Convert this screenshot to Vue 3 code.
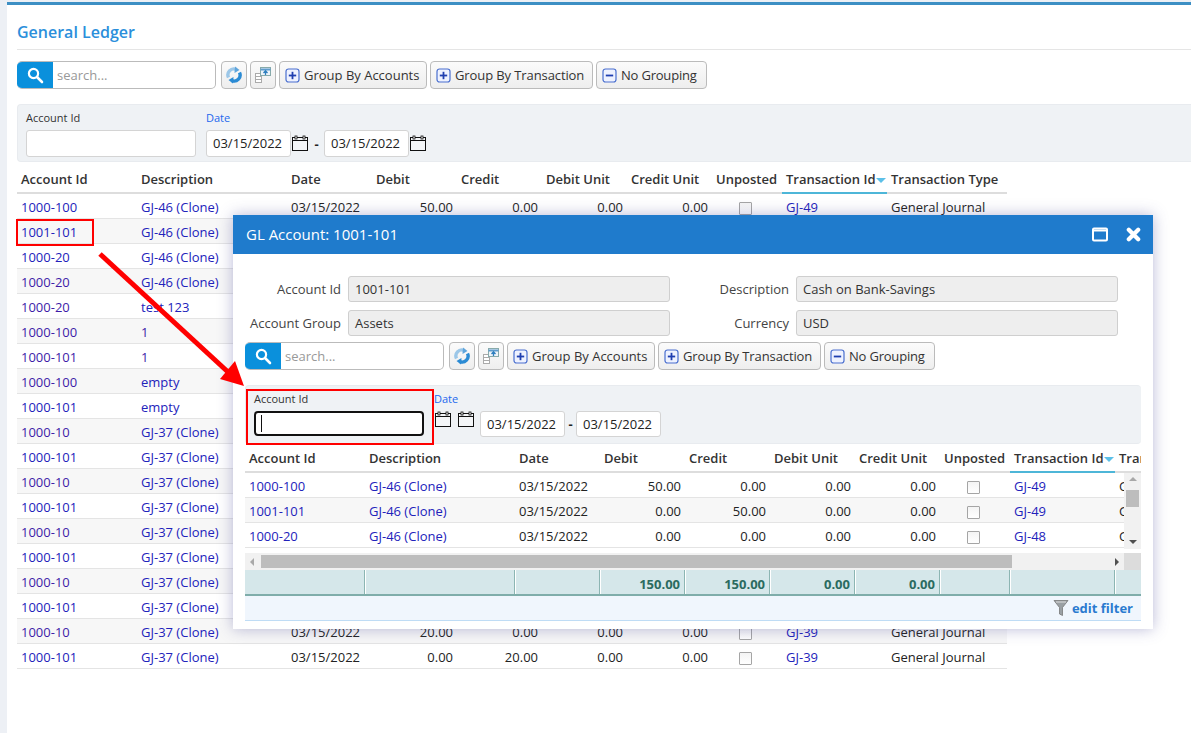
<script setup>
const cols = [
  { key: 'acc', label: 'Account Id', w: 120 },
  { key: 'desc', label: 'Description', w: 150 },
  { key: 'date', label: 'Date', w: 85 },
  { key: 'debit', label: 'Debit', w: 85 },
  { key: 'credit', label: 'Credit', w: 85 },
  { key: 'du', label: 'Debit Unit', w: 85 },
  { key: 'cu', label: 'Credit Unit', w: 85 },
  { key: 'unp', label: 'Unposted', w: 70 },
  { key: 'tid', label: 'Transaction Id', w: 105 },
  { key: 'type', label: 'Transaction Type', w: 120 },
]
const mk = (acc, desc, debit, credit, tid, seen = false) => ({ acc, desc, debit, credit, tid, seen })
const rows = [
  mk('1000-100', 'GJ-46 (Clone)', '50.00', '0.00', 'GJ-49'),
  mk('1001-101', 'GJ-46 (Clone)', '0.00', '50.00', 'GJ-49'),
  mk('1000-20', 'GJ-46 (Clone)', '0.00', '0.00', 'GJ-48'),
  mk('1000-20', 'GJ-46 (Clone)', '0.00', '0.00', 'GJ-48', true),
  mk('1000-20', 'test 123', '0.00', '0.00', 'GJ-47', true),
  mk('1000-100', '1', '0.00', '0.00', 'GJ-46', true),
  mk('1000-101', '1', '0.00', '0.00', 'GJ-46', true),
  mk('1000-100', 'empty', '0.00', '0.00', 'GJ-45', true),
  mk('1000-101', 'empty', '0.00', '0.00', 'GJ-45'),
  mk('1000-10', 'GJ-37 (Clone)', '20.00', '0.00', 'GJ-44', true),
  mk('1000-101', 'GJ-37 (Clone)', '0.00', '20.00', 'GJ-44'),
  mk('1000-10', 'GJ-37 (Clone)', '20.00', '0.00', 'GJ-43', true),
  mk('1000-101', 'GJ-37 (Clone)', '0.00', '20.00', 'GJ-43'),
  mk('1000-10', 'GJ-37 (Clone)', '20.00', '0.00', 'GJ-42', true),
  mk('1000-101', 'GJ-37 (Clone)', '0.00', '20.00', 'GJ-42'),
  mk('1000-10', 'GJ-37 (Clone)', '20.00', '0.00', 'GJ-41', true),
  mk('1000-101', 'GJ-37 (Clone)', '0.00', '20.00', 'GJ-41'),
  mk('1000-10', 'GJ-37 (Clone)', '20.00', '0.00', 'GJ-39', true),
  mk('1000-101', 'GJ-37 (Clone)', '0.00', '20.00', 'GJ-39'),
]
const modalRows = [
  mk('1000-100', 'GJ-46 (Clone)', '50.00', '0.00', 'GJ-49'),
  mk('1001-101', 'GJ-46 (Clone)', '0.00', '50.00', 'GJ-49'),
  mk('1000-20', 'GJ-46 (Clone)', '0.00', '0.00', 'GJ-48'),
]
const totals = [
  { w: 120, v: '' }, { w: 150, v: '' }, { w: 85, v: '' }, { w: 85, v: '150.00' }, { w: 85, v: '150.00' },
  { w: 85, v: '0.00' }, { w: 85, v: '0.00' }, { w: 70, v: '' }, { w: 105, v: '' }, { w: 26, v: '' },
]
const groups = [
  { label: 'Group By Accounts', sign: 'plus', w: 148, ls: 0 },
  { label: 'Group By Transaction', sign: 'plus', w: 163, ls: -0.1 },
  { label: 'No Grouping', sign: 'minus', w: 111, ls: -0.2 },
]
</script>

<template>
  <div class="page">
    <main class="main">
      <h1 class="title">General Ledger</h1>

      <div class="toolbar">
        <div class="search">
          <span class="search-btn">
            <svg width="18" height="18" viewBox="0 0 18 18"><circle cx="7.5" cy="7.5" r="4.6" fill="none" stroke="#fff" stroke-width="2.2"/><path d="M11 11l5 5" stroke="#fff" stroke-width="2.6" stroke-linecap="round"/></svg>
          </span>
          <span class="search-text">search...</span>
        </div>
        <button class="btn icon-btn">
          <svg width="18" height="18" viewBox="0 0 18 18"><path d="M3.500 11.500A6 6 0 0 1 11 3.300" fill="none" stroke="#9cc7e8" stroke-width="3.400"/><path d="M10 .5L14.500 4 9.500 7z" fill="#5fa5dc"/><path d="M14.500 6.500A6 6 0 0 1 7 14.700" fill="none" stroke="#2b8bd4" stroke-width="3.400"/><path d="M8 17.500L3.500 14 8.500 11z" fill="#2b8bd4"/></svg>
        </button>
        <button class="btn icon-btn">
          <svg width="18" height="18" viewBox="0 0 18 18"><rect x="1.500" y="7.500" width="6" height="9" fill="#fff" stroke="#aaa"/><path d="M1.500 10.500h6M1.500 13.500h6" stroke="#aaa"/><rect x="6.500" y="1.500" width="10" height="8" fill="#eef4f9" stroke="#8aa"/><path d="M6.500 3.500h10" stroke="#5f9ccc" stroke-width="2"/><path d="M11.500 9V5M9.500 7l2-2.200 2 2.200" fill="none" stroke="#2f7fbf" stroke-width="1.300"/></svg>
        </button>
        <button v-for="g in groups" :key="g.label" class="btn" :style="{ width: g.w + 'px', letterSpacing: g.ls + 'px' }">
          <svg width="15" height="15" viewBox="0 0 15 15"><rect x="1" y="1" width="13" height="13" rx="2.500" fill="#eef2ff" stroke="#4a6fcf" stroke-width="1.200"/><path d="M3.800 7.500h7.400" stroke="#1f3fb0" stroke-width="1.800"/><path v-if="g.sign === 'plus'" d="M7.500 3.800v7.400" stroke="#1f3fb0" stroke-width="1.800"/></svg>
          {{ g.label }}
        </button>
      </div>

      <div class="filters">
        <div class="field">
          <label class="flabel">Account Id</label>
          <div class="input acc-input"></div>
        </div>
        <div class="field date-field">
          <label class="flabel date-label">Date</label>
          <div class="date-row">
            <div class="input date-input">03/15/2022</div>
            <svg class="cal" width="17" height="17" viewBox="0 0 17 17"><rect x=".5" y="2.500" width="15" height="13" fill="#f4f6f8" stroke="#111"/><path d="M.5 5.500h15" stroke="#111"/><rect x="3" y="1" width="2" height="3" fill="#fff" stroke="#111" stroke-width=".8"/><rect x="11" y="1" width="2" height="3" fill="#fff" stroke="#111" stroke-width=".8"/></svg>
            <span class="dash">-</span>
            <div class="input date-input">03/15/2022</div>
            <svg class="cal" width="17" height="17" viewBox="0 0 17 17"><rect x=".5" y="2.500" width="15" height="13" fill="#f4f6f8" stroke="#111"/><path d="M.5 5.500h15" stroke="#111"/><rect x="3" y="1" width="2" height="3" fill="#fff" stroke="#111" stroke-width=".8"/><rect x="11" y="1" width="2" height="3" fill="#fff" stroke="#111" stroke-width=".8"/></svg>
          </div>
        </div>
      </div>

      <table class="grid">
        <colgroup><col v-for="c in cols" :key="c.key" :style="{ width: c.w + 'px' }" /></colgroup>
        <thead>
          <tr>
            <th v-for="c in cols" :key="c.key" :class="{ sorted: c.key === 'tid' }">
              {{ c.label }}<span v-if="c.key === 'tid'" class="sort"></span>
            </th>
          </tr>
        </thead>
        <tbody>
          <tr v-for="(r, i) in rows" :key="i">
            <td><a :class="{ seen: r.seen }">{{ r.acc }}</a></td>
            <td><a :class="{ seen: r.seen && r.desc === '1' }">{{ r.desc }}</a></td>
            <td>03/15/2022</td>
            <td class="num">{{ r.debit }}</td>
            <td class="num">{{ r.credit }}</td>
            <td class="num">0.00</td>
            <td class="num">0.00</td>
            <td class="ctr"><span class="check"></span></td>
            <td><a>{{ r.tid }}</a></td>
            <td>General Journal</td>
          </tr>
        </tbody>
      </table>
    </main>

    <section class="modal">
      <header class="modal-head">
        <span class="modal-title">GL Account: 1001-101</span>
        <span class="modal-ctrl">
          <svg width="16" height="15" viewBox="0 0 16 15"><rect x="1" y="1.500" width="14" height="12" rx="1" fill="none" stroke="#fff" stroke-width="2"/><path d="M1 3.500h14" stroke="#fff" stroke-width="2"/></svg>
          <svg width="15" height="15" viewBox="0 0 15 15"><path d="M2.800 2.800l9.400 9.400M12.200 2.800l-9.400 9.400" stroke="#fff" stroke-width="4.200" stroke-linecap="round"/></svg>
        </span>
      </header>
      <div class="modal-body">
        <div class="form">
          <label>Account Id</label><div class="ro">1001-101</div>
          <label>Description</label><div class="ro">Cash on Bank-Savings</div>
          <label>Account Group</label><div class="ro">Assets</div>
          <label>Currency</label><div class="ro">USD</div>
        </div>

        <div class="toolbar modal-toolbar">
          <div class="search">
            <span class="search-btn">
              <svg width="18" height="18" viewBox="0 0 18 18"><circle cx="7.500" cy="7.500" r="4.600" fill="none" stroke="#fff" stroke-width="2.200"/><path d="M11 11l5 5" stroke="#fff" stroke-width="2.600" stroke-linecap="round"/></svg>
            </span>
            <span class="search-text">search...</span>
          </div>
          <button class="btn icon-btn">
            <svg width="18" height="18" viewBox="0 0 18 18"><path d="M3.500 11.500A6 6 0 0 1 11 3.300" fill="none" stroke="#9cc7e8" stroke-width="3.400"/><path d="M10 .5L14.500 4 9.500 7z" fill="#5fa5dc"/><path d="M14.500 6.500A6 6 0 0 1 7 14.700" fill="none" stroke="#2b8bd4" stroke-width="3.400"/><path d="M8 17.500L3.500 14 8.500 11z" fill="#2b8bd4"/></svg>
          </button>
          <button class="btn icon-btn">
            <svg width="18" height="18" viewBox="0 0 18 18"><rect x="1.500" y="7.500" width="6" height="9" fill="#fff" stroke="#aaa"/><path d="M1.500 10.500h6M1.500 13.500h6" stroke="#aaa"/><rect x="6.500" y="1.500" width="10" height="8" fill="#eef4f9" stroke="#8aa"/><path d="M6.500 3.500h10" stroke="#5f9ccc" stroke-width="2"/><path d="M11.500 9V5M9.500 7l2-2.200 2 2.200" fill="none" stroke="#2f7fbf" stroke-width="1.300"/></svg>
          </button>
          <button v-for="g in groups" :key="g.label" class="btn" :style="{ width: g.w + 'px', letterSpacing: g.ls + 'px' }">
            <svg width="15" height="15" viewBox="0 0 15 15"><rect x="1" y="1" width="13" height="13" rx="2.500" fill="#eef2ff" stroke="#4a6fcf" stroke-width="1.200"/><path d="M3.800 7.500h7.400" stroke="#1f3fb0" stroke-width="1.800"/><path v-if="g.sign === 'plus'" d="M7.500 3.800v7.400" stroke="#1f3fb0" stroke-width="1.800"/></svg>
            {{ g.label }}
          </button>
        </div>

        <div class="filters modal-filters">
          <div class="field">
            <label class="flabel">Account Id</label>
            <div class="input acc-input focused"><span class="caret"></span></div>
          </div>
          <div class="field date-field modal-date">
            <label class="flabel date-label">Date</label>
            <div class="date-row">
              <svg class="cal cal1" width="17" height="17" viewBox="0 0 17 17"><rect x=".5" y="2.500" width="15" height="13" fill="#f4f6f8" stroke="#111"/><path d="M.5 5.500h15" stroke="#111"/><rect x="3" y="1" width="2" height="3" fill="#fff" stroke="#111" stroke-width=".8"/><rect x="11" y="1" width="2" height="3" fill="#fff" stroke="#111" stroke-width=".8"/></svg>
              <svg class="cal cal2" width="17" height="17" viewBox="0 0 17 17"><rect x=".5" y="2.500" width="15" height="13" fill="#f4f6f8" stroke="#111"/><path d="M.5 5.500h15" stroke="#111"/><rect x="3" y="1" width="2" height="3" fill="#fff" stroke="#111" stroke-width=".8"/><rect x="11" y="1" width="2" height="3" fill="#fff" stroke="#111" stroke-width=".8"/></svg>
              <div class="input date-input">03/15/2022</div>
              <span class="dash">-</span>
              <div class="input date-input">03/15/2022</div>
            </div>
          </div>
        </div>

        <div class="viewport">
          <div class="vp-head">
            <table class="grid">
              <colgroup><col v-for="c in cols" :key="c.key" :style="{ width: c.w + 'px' }" /></colgroup>
              <thead>
                <tr>
                  <th v-for="c in cols" :key="c.key" :class="{ sorted: c.key === 'tid' }">
                    {{ c.label }}<span v-if="c.key === 'tid'" class="sort"></span>
                  </th>
                </tr>
              </thead>
            </table>
          </div>
          <div class="vp-mid">
            <div class="vp-rows">
              <table class="grid">
                <colgroup><col v-for="c in cols" :key="c.key" :style="{ width: c.w + 'px' }" /></colgroup>
                <tbody>
                  <tr v-for="(r, i) in modalRows" :key="i">
                    <td><a>{{ r.acc }}</a></td>
                    <td><a>{{ r.desc }}</a></td>
                    <td>03/15/2022</td>
                    <td class="num">{{ r.debit }}</td>
                    <td class="num">{{ r.credit }}</td>
                    <td class="num">0.00</td>
                    <td class="num">0.00</td>
                    <td class="ctr"><span class="check"></span></td>
                    <td><a>{{ r.tid }}</a></td>
                    <td>General Journal</td>
                  </tr>
                </tbody>
              </table>
            </div>
            <div class="vbar">
              <span class="tri up"></span>
              <span class="vthumb"></span>
              <span class="tri down"></span>
            </div>
          </div>
          <div class="hbar">
            <div class="htrack">
              <span class="tri left"></span>
              <span class="hthumb"></span>
              <span class="tri right"></span>
            </div>
            <div class="corner"></div>
          </div>
          <div class="totals">
            <div v-for="(t, i) in totals" :key="i" class="total" :style="{ width: t.w + 'px' }">{{ t.v }}</div>
          </div>
          <div class="filter-bar">
            <svg width="16" height="18" viewBox="0 0 16 18"><path d="M1 1.500h14L9.500 8.500v8l-3-1.500V8.500z" fill="#9aa0a4" stroke="#777" stroke-width=".8"/><path d="M3 3h10" stroke="#ddd" stroke-width="1"/></svg>
            <span>edit filter</span>
          </div>
        </div>
      </div>
    </section>

    <div class="mark mark-a"></div>
    <div class="mark mark-b"></div>
    <svg class="arrow" width="1191" height="733" viewBox="0 0 1191 733">
      <path d="M100 254L228 372" stroke="#f00" stroke-width="5" fill="none"/>
      <path d="M244 386L220 379 235 361z" fill="#f00"/>
    </svg>
  </div>
</template>

<style>
html, body { margin: 0; padding: 0; background: #fff; }
</style>

<style scoped>
.page {
  position: relative;
  width: 1191px;
  height: 733px;
  overflow: hidden;
  background: #edf0f5;
  font-family: "Open Sans", sans-serif;
  font-size: 13px;
  color: #222;
}
.main {
  margin: 2px 0 0 7px;
  height: 731px;
  box-sizing: border-box;
  padding: 0 0 0 10px;
  background: #fff;
  border-top: 3px solid #3d8fc4;
}
.title {
  margin: 0;
  height: 45px;
  box-sizing: border-box;
  border-bottom: 1px solid #e5e5e5;
  padding-top: 15px;
  font-size: 16px;
  line-height: 24px;
  font-weight: 600;
  color: #2b8fdb;
}
.toolbar {
  display: flex;
  gap: 3px;
  margin-top: 11px;
  height: 28px;
}
.search {
  display: flex;
  width: 199px;
  height: 28px;
  box-sizing: border-box;
  margin-right: 2px;
  border: 1px solid #bbb;
  border-left: 0;
  border-radius: 5px;
  overflow: hidden;
  background: #fff;
}
.search-btn {
  display: flex;
  align-items: center;
  justify-content: center;
  width: 36px;
  margin-top: -1px;
  margin-bottom: -1px;
  background: #0a90dc;
}
.search-text {
  padding-left: 4px;
  line-height: 26px;
  color: #999;
  font-size: 13px;
}
.btn {
  display: flex;
  align-items: center;
  gap: 4px;
  box-sizing: border-box;
  height: 28px;
  padding: 0 0 0 5px;
  border: 1px solid #bbb;
  border-radius: 4px;
  background: linear-gradient(#fbfbfb, #eeeeee);
  font: 13px "Open Sans", sans-serif;
  color: #333;
  white-space: nowrap;
}
.icon-btn {
  width: 26px;
  padding: 0;
  justify-content: center;
}
.filters {
  display: flex;
  gap: 10px;
  height: 58px;
  box-sizing: border-box;
  margin-top: 15px;
  padding: 6px 8px 0;
  background: #eff2f5;
  border: 1px solid #e8ebef;
  border-radius: 4px 0 0 4px;
  border-right: 0;
}
.field { display: flex; flex-direction: column; }
.flabel {
  height: 19px;
  font-size: 11px;
  line-height: 14px;
  color: #333;
}
.date-label { color: #2468ee; }
.date-row { display: flex; align-items: center; }
.input {
  box-sizing: border-box;
  height: 27px;
  background: #fff;
  border: 1px solid #d4d4d4;
  border-radius: 3px;
}
.acc-input { width: 170px; }
.date-input {
  width: 85px;
  padding-right: 2px;
  line-height: 25px;
  text-align: center;
  color: #222;
}
.cal { margin-left: 1px; flex: none; }
.dash { width: 15px; text-align: center; font-weight: 700; }
.grid {
  table-layout: fixed;
  width: 990px;
  border-collapse: separate;
  border-spacing: 0;
}
.main > .grid { margin-top: 8px; }
th {
  height: 24px;
  padding: 0 4px;
  box-sizing: border-box;
  text-align: left;
  vertical-align: top;
  line-height: 19px;
  font-weight: 600;
  font-size: 13px;
  color: #333;
  white-space: nowrap;
  border-bottom: 2px solid #ddd;
}
th.sorted { border-bottom: 2px solid #4db6d8; }
.sort {
  display: inline-block;
  margin-left: 1px;
  vertical-align: middle;
  border: 5px solid transparent;
  border-top: 5px solid #5cc0e8;
  border-bottom: 0;
}
td {
  height: 25px;
  box-sizing: border-box;
  padding: 1px 4px 0;
  border-bottom: 1px solid #e4e4e4;
  white-space: nowrap;
  color: #222;
}
tbody tr:nth-child(even) td { background: #f7f7f7; }
a { color: #2222bb; }
a.seen { color: #3d1ca8; }
.num { text-align: right; }
.ctr { text-align: center; padding-right: 7px; }
.check {
  display: inline-block;
  width: 13px;
  height: 13px;
  box-sizing: border-box;
  vertical-align: middle;
  background: linear-gradient(#f4f4f4, #fff);
  border: 1px solid #a5a5a5;
  border-radius: 1px;
}
.modal {
  position: absolute;
  left: 233px;
  top: 215px;
  width: 920px;
  height: 414px;
  background: #fff;
  box-shadow: 0 0 14px rgba(70, 70, 150, .38);
}
.modal-head {
  display: flex;
  align-items: center;
  justify-content: space-between;
  height: 39px;
  padding: 0 12px 0 13px;
  background: #1f7bcc;
  color: #fff;
}
.modal-title { font-size: 15px; font-weight: 500; margin-top: -2px; }
.modal-ctrl { display: flex; align-items: center; gap: 18px; }
.modal-body { padding: 22px 12px 0; }
.form {
  display: grid;
  grid-template-columns: 96px 322px 112px 322px;
  grid-auto-rows: 26px;
  row-gap: 8px;
  column-gap: 7px;
}
.form label {
  text-align: right;
  line-height: 27px;
  color: #444;
  font-size: 13px;
}
.ro {
  box-sizing: border-box;
  padding-left: 6px;
  line-height: 25px;
  background: #eeeeee;
  border: 1px solid #cfcfcf;
  border-radius: 3px;
  color: #333;
}
.modal-toolbar { margin-top: 6px; }
.modal-filters {
  width: 896px;
  height: 59px;
  margin-top: 15px;
  border-radius: 4px;
  padding-right: 0;
}
.modal-filters .acc-input { height: 25px; }
.modal-date .date-row { align-items: flex-start; }
.modal-date .date-input { height: 26px; line-height: 24px; }
.modal-date .cal1 { margin: 0 6px 0 1px; }
.modal-date .cal2 { margin: 0 5px 0 0; }
.modal-date .dash { width: 11px; line-height: 26px; }
.focused {
  display: flex;
  align-items: center;
  padding-left: 5px;
  border: 2px solid #111;
  border-radius: 4px;
}
.caret { width: 1px; height: 17px; background: #111; }
.viewport { width: 896px; margin-top: 5px; }
.vp-head { overflow: hidden; height: 24px; }
.vp-mid { display: flex; height: 76px; }
.vp-rows { width: 879px; overflow: hidden; }
.vbar {
  position: relative;
  width: 17px;
  background: #f1f1f1;
}
.vthumb {
  position: absolute;
  left: 2px;
  top: 17px;
  width: 13px;
  height: 17px;
  background: #bdbdbd;
}
.hbar { display: flex; height: 17px; margin-top: 4px; }
.htrack { position: relative; width: 879px; background: #f1f1f1; }
.hthumb {
  position: absolute;
  left: 16px;
  top: 2px;
  width: 751px;
  height: 13px;
  background: #bdbdbd;
}
.corner { flex: 1; background: #dcdcdc; }
.tri { position: absolute; width: 0; height: 0; border: 4px solid transparent; }
.tri.up { left: 5px; top: 4px; border-top: 0; border-bottom-color: #a8a8a8; }
.tri.down { left: 5px; bottom: 5px; border-bottom: 0; border-top-color: #505050; }
.tri.left { left: 5px; top: 5px; border-left: 0; border-right-color: #a8a8a8; }
.tri.right { right: 5px; top: 5px; border-right: 0; border-left-color: #505050; }
.totals {
  display: flex;
  height: 24px;
  overflow: hidden;
  background: #d5e7ea;
  border-bottom: 2px solid #7fadaa;
}
.total {
  box-sizing: border-box;
  flex: none;
  padding-right: 4px;
  text-align: right;
  line-height: 29px;
  font-weight: 700;
  color: #2b6b60;
  border-right: 1px solid #8cb5b3;
  box-shadow: 1px 0 0 #fff;
}
.total:last-child { border-right: 0; box-shadow: none; }
.filter-bar {
  display: flex;
  align-items: center;
  justify-content: flex-end;
  gap: 3px;
  height: 24px;
  padding-right: 8px;
  background: #f0f6fd;
  border-bottom: 1px solid #bfdcf5;
  color: #2a7bd0;
  font-weight: 700;
}
.mark {
  position: absolute;
  box-sizing: border-box;
  border: 2px solid #f00;
}
.mark-a { left: 16px; top: 219px; width: 78px; height: 27px; }
.mark-b { left: 246px; top: 389px; width: 188px; height: 56px; }
.arrow { position: absolute; left: 0; top: 0; pointer-events: none; }
</style>
